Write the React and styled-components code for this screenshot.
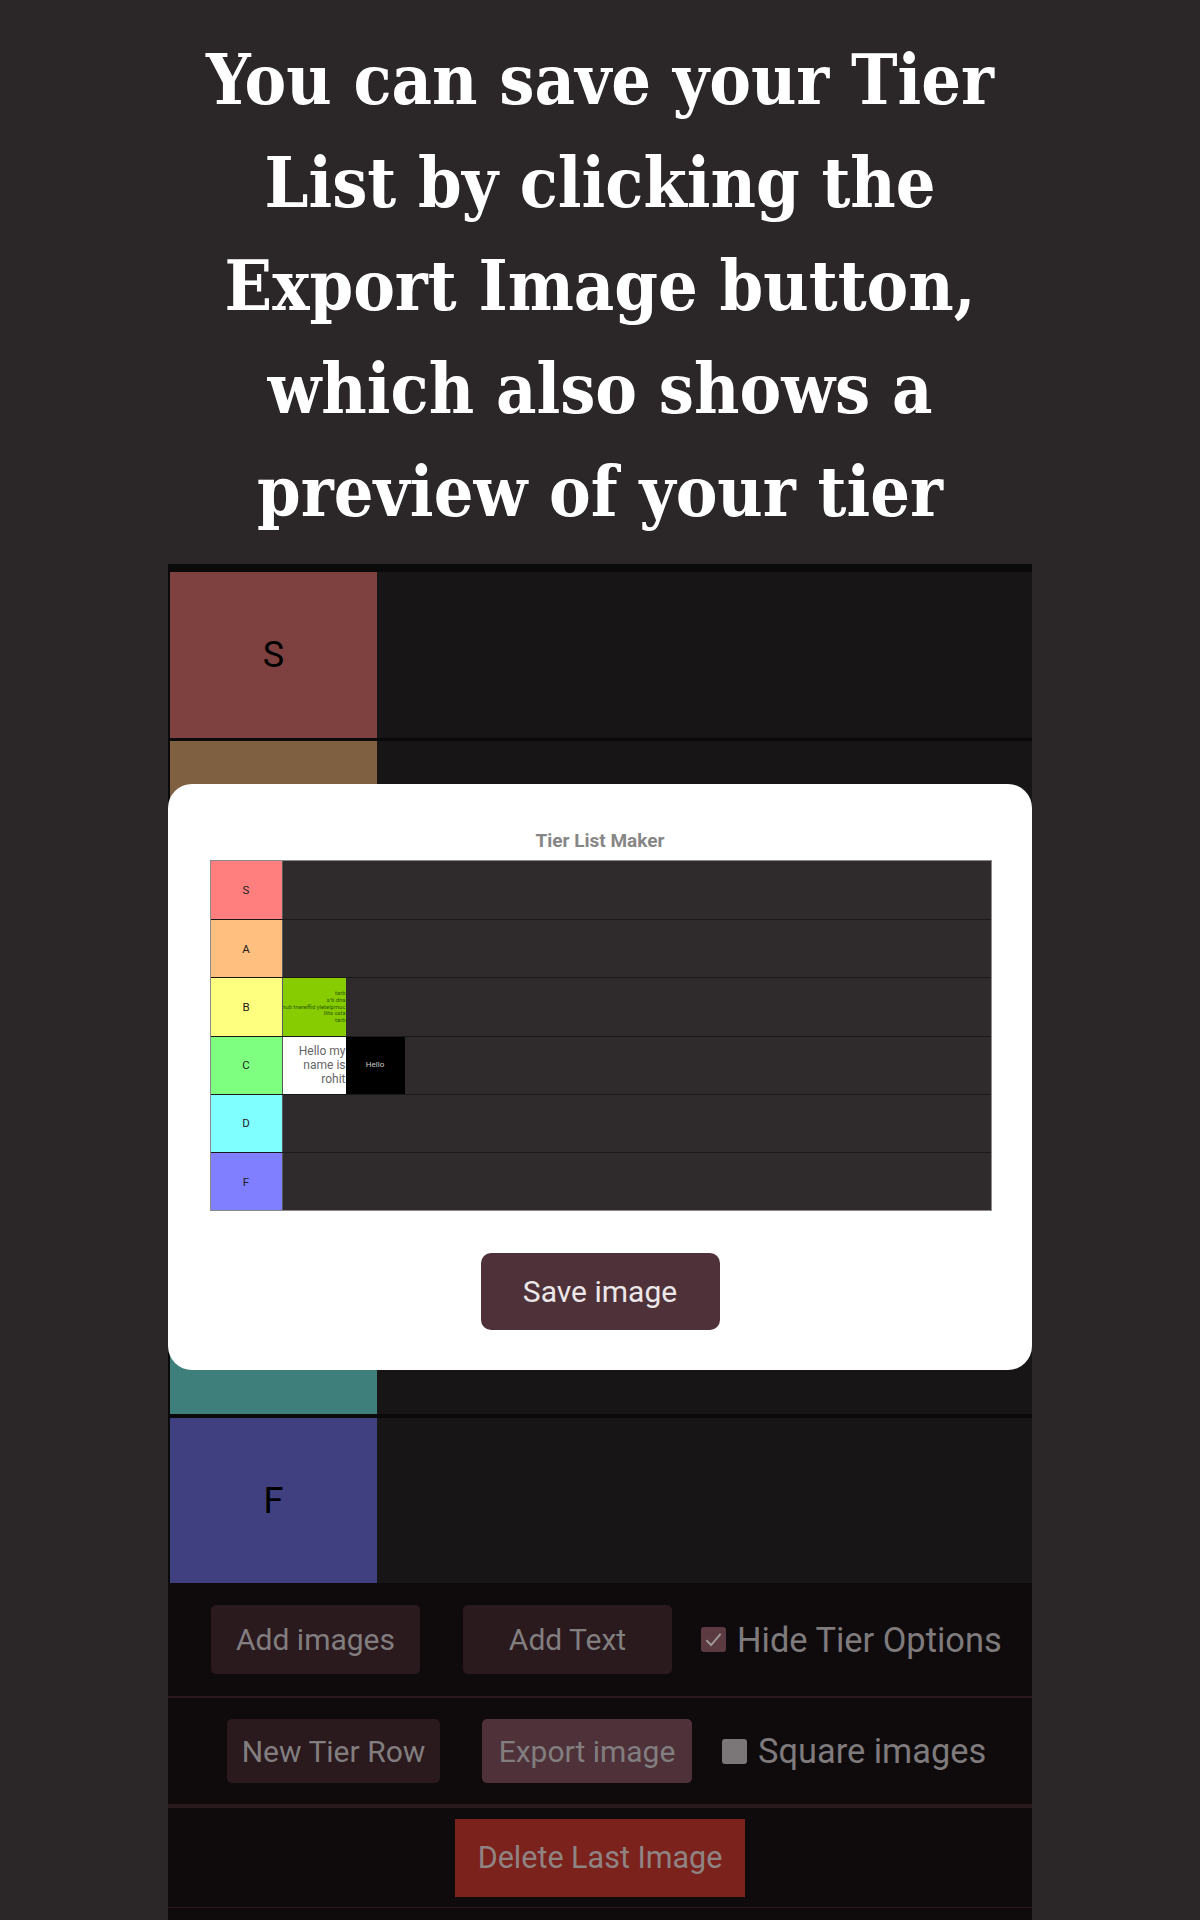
import React from "react";
import styled, { createGlobalStyle } from "styled-components";

const GlobalStyle = createGlobalStyle`
  body {
    margin: 0;
    background: #2b2628;
    font-family: Roboto, "Liberation Sans", sans-serif;
  }
`;

const Page = styled.div`
  height: 1920px;
  overflow: hidden;
  display: flex;
  flex-direction: column;
  align-items: center;
`;

const Heading = styled.h1`
  flex: none;
  margin: 0;
  height: 564px;
  box-sizing: border-box;
  padding-top: 28px;
  width: 900px;
  color: #fff;
  text-align: center;
  font-family: "DejaVu Serif Condensed", "DejaVu Serif", serif;
  font-size: 69.5px;
  font-weight: 700;
  line-height: 103px;
`;

const Board = styled.div`
  position: relative;
  flex: 1;
  width: 864px;
  background: #0f0b0d;
`;

const TierList = styled.div`
  display: flex;
  flex-direction: column;
  background: #0a0a0a;
  padding-top: 8px;
`;

const TierRow = styled.div`
  display: grid;
  grid-template-columns: 209px 1fr;
  height: 165.5px;
  margin-bottom: 3.7px;

  &:last-child {
    margin-bottom: 0;
  }
`;

const TierLabel = styled.div`
  margin-left: 2px;
  display: flex;
  align-items: center;
  justify-content: center;
  background: ${(p) => p.$color};
  color: #000;
  font-size: 36px;
`;

const TierSlot = styled.div`
  background: #171516;
`;

const Controls = styled.div`
  display: flex;
  flex-direction: column;
`;

const ControlRow = styled.div`
  display: flex;
  align-items: center;
  justify-content: ${(p) => p.$center ? "center" : "flex-start"};
  box-sizing: border-box;
  height: ${(p) => p.$height}px;
  padding-left: ${(p) => p.$inset}px;
  border-bottom: ${(p) => p.$rule}px solid #2a1a1e;
`;

const ActionButton = styled.div`
  display: flex;
  align-items: center;
  justify-content: center;
  width: ${(p) => p.$width}px;
  height: ${(p) => p.$height}px;
  margin-right: ${(p) => p.$gap}px;
  border-radius: 5px;
  background: ${(p) => p.$active ? "#4f3239" : "#2a191d"};
  color: #827e80;
  font-size: 30px;
`;

const DeleteButton = styled.div`
  display: flex;
  align-items: center;
  justify-content: center;
  width: 290px;
  height: 78px;
  background: #7c221c;
  color: #8f8483;
  font-size: 30.5px;
`;

const CheckField = styled.label`
  display: flex;
  align-items: center;
  gap: 11px;
  color: #7f7b7d;
  font-size: 34.4px;
`;

const CheckBox = styled.span`
  display: flex;
  align-items: center;
  justify-content: center;
  width: 25px;
  height: 25px;
  border-radius: 3px;
  background: ${(p) => p.$checked ? "#5c3a41" : "#7b7779"};
`;

const ExportModal = styled.div`
  position: absolute;
  top: 220px;
  left: 0;
  right: 0;
  height: 586px;
  box-sizing: border-box;
  padding-top: 45px;
  display: flex;
  flex-direction: column;
  align-items: center;
  background: #fff;
  border-radius: 24px;
`;

const PreviewTitle = styled.div`
  height: 31px;
  color: #868686;
  font-size: 19px;
  font-weight: 700;
  line-height: 24px;
`;

const Preview = styled.div`
  width: 782px;
  display: flex;
  flex-direction: column;
  background: #2f2b2c;
  border: 1px solid #8a8a8a;
  box-sizing: border-box;
  margin-left: 1px;
`;

const PreviewRow = styled.div`
  display: flex;
  height: 58.2px;
  border-top: 1px solid #1a1819;
  box-sizing: border-box;

  &:first-child {
    border-top: 0;
  }
`;

const PreviewLabel = styled.div`
  width: 71px;
  flex: none;
  display: flex;
  align-items: center;
  justify-content: center;
  background: ${(p) => p.$color};
  border-right: 1px solid #55595a;
  color: #222;
  font-size: 11.5px;
`;

const PreviewTile = styled.div`
  width: ${(p) => p.$width}px;
  flex: none;
  display: flex;
  flex-direction: column;
  justify-content: center;
  align-items: ${(p) => p.$center ? "center" : "flex-end"};
  text-align: ${(p) => p.$center ? "center" : "right"};
  background: ${(p) => p.$color};
  color: ${(p) => p.$ink};
  font-size: ${(p) => p.$size}px;
  line-height: ${(p) => p.$size * 1.17}px;
  white-space: pre;
  overflow: hidden;
`;

const SaveButton = styled.div`
  margin-top: 42px;
  width: 239px;
  height: 77px;
  display: flex;
  align-items: center;
  justify-content: center;
  background: #4f3239;
  border-radius: 10px;
  color: #ece7e8;
  font-size: 30px;
`;

const tiers = [
  { name: "S", color: "#7f4040" },
  { name: "A", color: "#7f6040" },
  { name: "B", color: "#7f7f40" },
  { name: "C", color: "#407f40" },
  { name: "D", color: "#3f7f7b" },
  { name: "F", color: "#403f80" },
];

const previewTiers = [
  { name: "S", color: "#ff7f7f" },
  { name: "A", color: "#ffbf7f" },
  { name: "B", color: "#ffff7f" },
  { name: "C", color: "#7fff7f" },
  { name: "D", color: "#7fffff" },
  { name: "F", color: "#7f7fff" },
];

const CheckMark = () => (
  <svg width="19" height="19" viewBox="0 0 24 24" fill="none" stroke="#a09a9b" strokeWidth="2.4">
    <path d="M3 13l6 6L21 5" />
  </svg>
);

const App = () => {
  return (
    <Page>
      <GlobalStyle />
      <Heading>
        You can save your Tier<br />
        List by clicking the<br />
        Export Image button,<br />
        which also shows a<br />
        preview of your tier
      </Heading>
      <Board>
        <TierList>
          {tiers.map((t) => (
            <TierRow key={t.name}>
              <TierLabel $color={t.color}>{t.name}</TierLabel>
              <TierSlot />
            </TierRow>
          ))}
        </TierList>
        <Controls>
          <ControlRow $height={115} $inset={43} $rule={2}>
            <ActionButton $width={209} $height={69} $gap={43}>Add images</ActionButton>
            <ActionButton $width={209} $height={69} $gap={29}>Add Text</ActionButton>
            <CheckField>
              <CheckBox $checked><CheckMark /></CheckBox>
              Hide Tier Options
            </CheckField>
          </ControlRow>
          <ControlRow $height={110} $inset={59} $rule={4}>
            <ActionButton $width={213} $height={64} $gap={42}>New Tier Row</ActionButton>
            <ActionButton $width={210} $height={64} $gap={30} $active>Export image</ActionButton>
            <CheckField>
              <CheckBox />
              Square images
            </CheckField>
          </ControlRow>
          <ControlRow $height={100} $center $rule={1}>
            <DeleteButton>Delete Last Image</DeleteButton>
          </ControlRow>
        </Controls>
        <ExportModal>
          <PreviewTitle>Tier List Maker</PreviewTitle>
          <Preview>
            {previewTiers.map((t) => (
              <PreviewRow key={t.name}>
                <PreviewLabel $color={t.color}>{t.name}</PreviewLabel>
                {t.name === "B" && (
                  <PreviewTile $width={63} $color="#86cc00" $ink="#2f5a00" $size={5.9}>
                    {"tarb\ns'ti dna\nhub tnereffid yletelpmoc\nllits osla\ntarb"}
                  </PreviewTile>
                )}
                {t.name === "C" && (
                  <>
                    <PreviewTile $width={63} $color="#fff" $ink="#666" $size={12}>
                      {"Hello my\nname is\nrohit"}
                    </PreviewTile>
                    <PreviewTile $width={59} $color="#000" $ink="#ccc" $size={8} $center>Hello</PreviewTile>
                  </>
                )}
              </PreviewRow>
            ))}
          </Preview>
          <SaveButton>Save image</SaveButton>
        </ExportModal>
      </Board>
    </Page>
  );
};

export default App;
